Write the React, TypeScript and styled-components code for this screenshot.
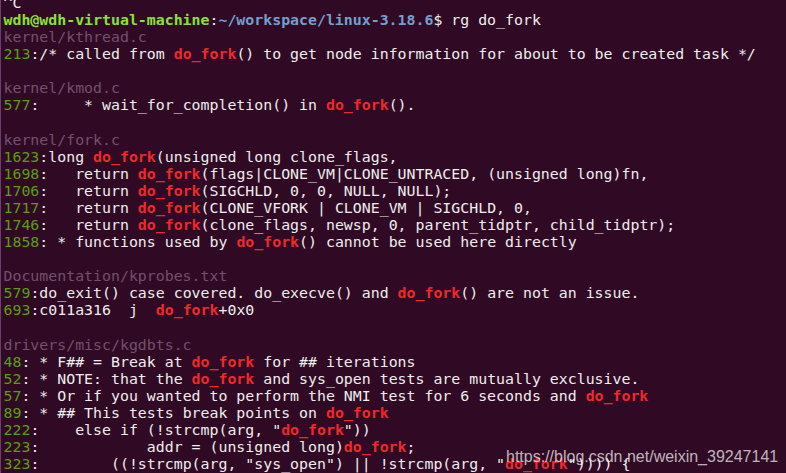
import React from "react";
import styled, { createGlobalStyle } from "styled-components";

const Global = createGlobalStyle`
  html, body {
    margin: 0;
    padding: 0;
    width: 100%;
    height: 100%;
    overflow: hidden;
    background: #300a24;
  }
`;

const Terminal = styled.div`
  position: relative;
  width: 786px;
  height: 473px;
  box-sizing: border-box;
  overflow: hidden;
  background: #300a24;
  border-left: 1px solid #6f3f69;
  padding-left: 2.5px;
`;

const Screen = styled.div`
  margin-top: -5px;
  font-family: "DejaVu Sans Mono", "Liberation Mono", monospace;
  font-size: 14.88px;
  line-height: 17.08px;
  color: #eeeeec;
  white-space: pre;
`;

const Line = styled.div`
  height: 17.08px;
`;

type Tone = "user" | "path" | "file" | "num" | "match";

const toneColor: Record<Tone, string> = {
  user: "#8ae234",
  path: "#729fcf",
  file: "#72506f",
  num: "#5a9e10",
  match: "#ef2929",
};

const Seg = styled.span<{ $tone: Tone }>`
  color: ${(p) => toneColor[p.$tone]};
  font-weight: ${(p) =>
    p.$tone === "user" || p.$tone === "path" || p.$tone === "match"
      ? "bold"
      : "normal"};
`;

const Watermark = styled.div`
  position: absolute;
  left: 505px;
  top: 448.5px;
  font-family: "Liberation Sans", Arial, sans-serif;
  font-size: 16px;
  line-height: 16px;
  color: rgba(255, 255, 255, 0.7);
  white-space: nowrap;
`;

type Row =
  | { kind: "plain"; text: string }
  | { kind: "prompt" }
  | { kind: "file"; text: string }
  | { kind: "hit"; num: string; text: string };

const rows: Row[] = [
  { kind: "plain", text: "^C" },
  { kind: "prompt" },
  { kind: "file", text: "kernel/kthread.c" },
  {
    kind: "hit",
    num: "213",
    text: "/* called from do_fork() to get node information for about to be created task */",
  },
  { kind: "plain", text: "" },
  { kind: "file", text: "kernel/kmod.c" },
  { kind: "hit", num: "577", text: "     * wait_for_completion() in do_fork()." },
  { kind: "plain", text: "" },
  { kind: "file", text: "kernel/fork.c" },
  { kind: "hit", num: "1623", text: "long do_fork(unsigned long clone_flags," },
  {
    kind: "hit",
    num: "1698",
    text: "   return do_fork(flags|CLONE_VM|CLONE_UNTRACED, (unsigned long)fn,",
  },
  { kind: "hit", num: "1706", text: "   return do_fork(SIGCHLD, 0, 0, NULL, NULL);" },
  {
    kind: "hit",
    num: "1717",
    text: "   return do_fork(CLONE_VFORK | CLONE_VM | SIGCHLD, 0,",
  },
  {
    kind: "hit",
    num: "1746",
    text: "   return do_fork(clone_flags, newsp, 0, parent_tidptr, child_tidptr);",
  },
  {
    kind: "hit",
    num: "1858",
    text: " * functions used by do_fork() cannot be used here directly",
  },
  { kind: "plain", text: "" },
  { kind: "file", text: "Documentation/kprobes.txt" },
  {
    kind: "hit",
    num: "579",
    text: "do_exit() case covered. do_execve() and do_fork() are not an issue.",
  },
  { kind: "hit", num: "693", text: "c011a316  j  do_fork+0x0" },
  { kind: "plain", text: "" },
  { kind: "file", text: "drivers/misc/kgdbts.c" },
  { kind: "hit", num: "48", text: " * F## = Break at do_fork for ## iterations" },
  {
    kind: "hit",
    num: "52",
    text: " * NOTE: that the do_fork and sys_open tests are mutually exclusive.",
  },
  {
    kind: "hit",
    num: "57",
    text: " * Or if you wanted to perform the NMI test for 6 seconds and do_fork",
  },
  { kind: "hit", num: "89", text: " * ## This tests break points on do_fork" },
  { kind: "hit", num: "222", text: "    else if (!strcmp(arg, \"do_fork\"))" },
  { kind: "hit", num: "223", text: "            addr = (unsigned long)do_fork;" },
  {
    kind: "hit",
    num: "323",
    text: "        ((!strcmp(arg, \"sys_open\") || !strcmp(arg, \"do_fork\")))) {",
  },
];

function Highlighted({ text }: { text: string }) {
  const parts = text.split("do_fork");
  return (
    <>
      {parts.map((p, i) => (
        <React.Fragment key={i}>
          {p}
          {i < parts.length - 1 && <Seg $tone="match">do_fork</Seg>}
        </React.Fragment>
      ))}
    </>
  );
}

function RowView({ row }: { row: Row }) {
  switch (row.kind) {
    case "prompt":
      return (
        <Line>
          <Seg $tone="user">wdh@wdh-virtual-machine</Seg>:
          <Seg $tone="path">~/workspace/linux-3.18.6</Seg>$ rg do_fork
        </Line>
      );
    case "file":
      return (
        <Line>
          <Seg $tone="file">{row.text}</Seg>
        </Line>
      );
    case "hit":
      return (
        <Line>
          <Seg $tone="num">{row.num}</Seg>:
          <Highlighted text={row.text} />
        </Line>
      );
    default:
      return <Line>{row.text}</Line>;
  }
}

export default function App() {
  return (
    <>
      <Global />
      <Terminal>
        <Screen>
          {rows.map((r, i) => (
            <RowView key={i} row={r} />
          ))}
        </Screen>
        <Watermark>https://blog.csdn.net/weixin_39247141</Watermark>
      </Terminal>
    </>
  );
}
